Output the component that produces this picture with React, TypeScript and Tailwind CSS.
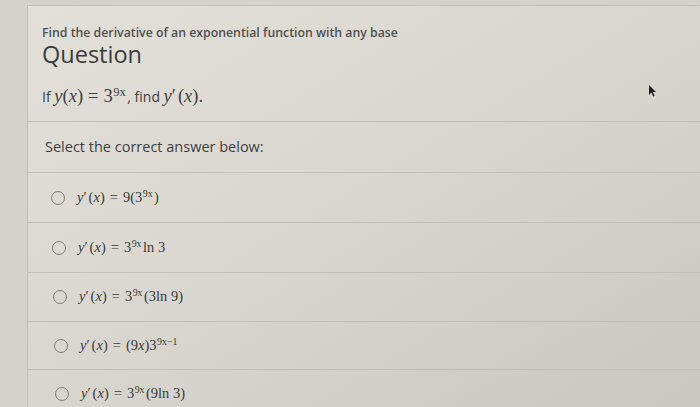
import React from 'react';

const serif = { fontFamily: '"Liberation Serif", "Times New Roman", serif' };

const Var = ({ children }: { children: React.ReactNode }) => <i>{children}</i>;

const Exp = ({ children }: { children: React.ReactNode }) => (
  <sup className="text-[0.68em] ml-[0.5px] mr-[1.5px]">{children}</sup>
);

const Eq = () => <span className="mx-[5px]">=</span>;

const YPrime = () => (
  <>
    <Var>y</Var>′<span className="ml-[2px]">(</span>
    <Var>x</Var>)
  </>
);

const options: { key: string; height: string; pad: string; body: React.ReactNode }[] = [
  {
    key: 'a',
    height: 'h-[50px]',
    pad: 'pl-[23px]',
    body: (
      <>
        <YPrime />
        <Eq />
        9(3<Exp>9x</Exp>)
      </>
    ),
  },
  {
    key: 'b',
    height: 'h-[50px]',
    pad: 'pl-[24px]',
    body: (
      <>
        <YPrime />
        <Eq />
        3<Exp>9x</Exp>ln 3
      </>
    ),
  },
  {
    key: 'c',
    height: 'h-[49px]',
    pad: 'pl-[25px]',
    body: (
      <>
        <YPrime />
        <Eq />
        3<Exp>9x</Exp>(3ln 9)
      </>
    ),
  },
  {
    key: 'd',
    height: 'h-[48px]',
    pad: 'pl-[26px]',
    body: (
      <>
        <YPrime />
        <Eq />
        (9<Var>x</Var>)3<Exp>9x−1</Exp>
      </>
    ),
  },
  {
    key: 'e',
    height: 'h-[48px]',
    pad: 'pl-[27px]',
    body: (
      <>
        <YPrime />
        <Eq />
        3<Exp>9x</Exp>(9ln 3)
      </>
    ),
  },
];

export default function App() {
  return (
    <div
      className="relative w-[700px] h-[407px] overflow-hidden bg-[#d5d2cb] pl-[27px] pt-[5px]"
      style={{ fontFamily: '"Open Sans", "Liberation Sans", sans-serif' }}
    >
      <div className="h-full border-l-[1.5px] border-t-[1.5px] border-[#c2bfb8] bg-gradient-to-br from-[#e3e0da] via-[#d9d6cf] to-[#c9c7bf]">
        <section className="h-[115px] pl-[14px] pt-[18px]">
          <p className="text-[12.3px] leading-[18px] font-semibold text-[#505050]">
            Find the derivative of an exponential function with any base
          </p>
          <h1 className="text-[23.5px] leading-[24px] text-[#3b3b3b]">Question</h1>
          <p className="mt-[18px] text-[14px] leading-[25px] text-[#3f3f3f]">
            If{' '}
            <span style={serif} className="text-[18.5px]">
              <Var>y</Var>(<Var>x</Var>)
              <Eq />
              3<Exp>9x</Exp>
            </span>
            , find{' '}
            <span style={serif} className="text-[18.5px]">
              <YPrime />.
            </span>
          </p>
        </section>

        <section className="h-[51px] border-t-[1.5px] border-[#c2bfb8] pl-[17px] flex items-center">
          <p className="text-[14.5px] text-[#3f3f3f]">Select the correct answer below:</p>
        </section>

        {options.map((option) => (
          <div
            key={option.key}
            className={`${option.height} ${option.pad} border-t-[1.5px] border-[#c2bfb8] flex items-center gap-[12px]`}
          >
            <span className="w-[14px] h-[14px] rounded-full border-[1.5px] border-[#7d7d7b] shrink-0" />
            <span style={serif} className="text-[14.5px] text-[#3a3a3a]">
              {option.body}
            </span>
          </div>
        ))}
      </div>

      <svg className="absolute left-[648px] top-[84px]" width="9" height="13" viewBox="0 0 9 13">
        <path d="M1 1 L1 11 L3.4 8.6 L5.2 12.4 L6.6 11.8 L4.9 8.1 L8 8.1 Z" fill="#1f1f1f" />
      </svg>
    </div>
  );
}
